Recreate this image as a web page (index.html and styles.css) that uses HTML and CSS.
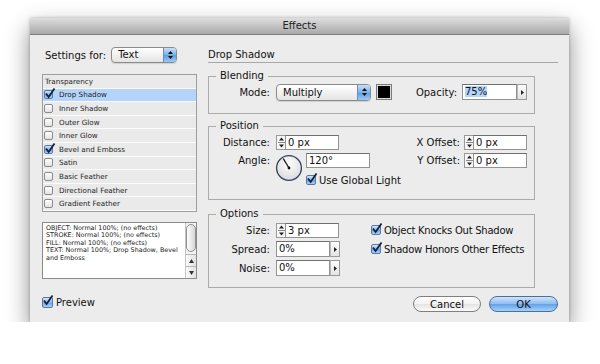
FILE: index.html
```html
<!DOCTYPE html>
<html lang="en">
<head>
    <meta charset="UTF-8">
    <meta name="viewport" content="width=device-width, initial-scale=1.0">
    <title>Effects</title>
    <link rel="stylesheet" href="styles.css">
</head>
<body>
    <div class="window">
        <div class="titlebar">Effects</div>
        <div class="content">
            <!-- Left column: target + effect list -->
            <div class="left">
                <div class="settings">
                    <span>Settings for:</span>
                    <div class="popup popup-text">
                        <span class="popup-label">Text</span>
                        <span class="popup-arrows">
                            <svg width="7" height="10" viewBox="0 0 7 10"><path d="M3.5 1 L6 4 H1Z M3.5 9 L6 6 H1Z" fill="#111"/></svg>
                        </span>
                    </div>
                </div>

                <ul class="effect-list">
                    <li class="head">Transparency</li>
                    <li class="selected"><span class="cb on"><svg viewBox="0 0 12 12"><path d="M2 5.5 L4.6 9 L10.5 0.5" fill="none" stroke="#15213a" stroke-width="1.8"/></svg></span>Drop Shadow</li>
                    <li><span class="cb"></span>Inner Shadow</li>
                    <li><span class="cb"></span>Outer Glow</li>
                    <li><span class="cb"></span>Inner Glow</li>
                    <li><span class="cb on"><svg viewBox="0 0 12 12"><path d="M2 5.5 L4.6 9 L10.5 0.5" fill="none" stroke="#15213a" stroke-width="1.8"/></svg></span>Bevel and Emboss</li>
                    <li><span class="cb"></span>Satin</li>
                    <li><span class="cb"></span>Basic Feather</li>
                    <li><span class="cb"></span>Directional Feather</li>
                    <li><span class="cb"></span>Gradient Feather</li>
                </ul>

                <div class="summary">
                    <div class="summary-text">OBJECT: Normal 100%; (no effects)<br>STROKE: Normal 100%; (no effects)<br>FILL: Normal 100%; (no effects)<br>TEXT: Normal 100%; Drop Shadow, Bevel<br>and Emboss</div>
                    <div class="scrollbar">
                        <div class="thumb"></div>
                        <div class="track"></div>
                        <div class="scroll-btn"><svg width="5" height="4" viewBox="0 0 5 4"><path d="M2.5 0 L5 4 H0Z" fill="#333"/></svg></div>
                        <div class="scroll-btn"><svg width="5" height="4" viewBox="0 0 5 4"><path d="M0 0 H5 L2.5 4Z" fill="#333"/></svg></div>
                    </div>
                </div>

                <div class="preview">
                    <span class="cb on big"><svg viewBox="0 0 12 12"><path d="M2 5.5 L4.6 9 L10.5 0.5" fill="none" stroke="#15213a" stroke-width="1.8"/></svg></span>
                    <span>Preview</span>
                </div>
            </div>

            <!-- Right column: drop shadow settings -->
            <div class="right">
                <h2>Drop Shadow</h2>

                <fieldset class="group blending">
                    <legend>Blending</legend>
                    <div class="row">
                        <span class="lbl">Mode:</span>
                        <div class="popup popup-mode">
                            <span class="popup-label">Multiply</span>
                            <span class="popup-arrows">
                                <svg width="7" height="10" viewBox="0 0 7 10"><path d="M3.5 1 L6 4 H1Z M3.5 9 L6 6 H1Z" fill="#111"/></svg>
                            </span>
                        </div>
                        <span class="swatch"></span>
                        <div class="opacity">
                            <span>Opacity:</span>
                            <div class="arrow-field">
                                <span class="field"><span class="sel">75%</span></span>
                                <span class="arrow-btn"><svg width="3" height="5" viewBox="0 0 3 5"><path d="M0 0 L3 2.5 L0 5Z" fill="#222"/></svg></span>
                            </div>
                        </div>
                    </div>
                </fieldset>

                <fieldset class="group position">
                    <legend>Position</legend>
                    <div class="cols">
                        <div class="col-left">
                            <div class="row">
                                <span class="lbl">Distance:</span>
                                <div class="spin-field">
                                    <span class="spinner"><svg width="7" height="13" viewBox="0 0 7 13"><path d="M3.5 1.5 L6 4.5 H1Z M3.5 11.5 L6 8.5 H1Z" fill="#222"/><path d="M0 6.5 H7" stroke="#888"/></svg></span>
                                    <span class="field">0 px</span>
                                </div>
                            </div>
                            <div class="angle-row">
                                <span class="lbl">Angle:</span>
                                <svg class="dial" width="28" height="28" viewBox="0 0 28 28">
                                    <defs>
                                        <radialGradient id="dialFill" cx="50%" cy="35%" r="65%">
                                            <stop offset="0" stop-color="#ffffff"/>
                                            <stop offset="1" stop-color="#d9d9d9"/>
                                        </radialGradient>
                                    </defs>
                                    <circle cx="14" cy="14" r="12.4" fill="url(#dialFill)" stroke="#33415f" stroke-width="1.3"/>
                                    <path d="M14 14 L8.3 4.6" stroke="#111" stroke-width="1.2"/>
                                    <circle cx="14" cy="14" r="1.4" fill="#111"/>
                                </svg>
                                <div class="angle-stack">
                                    <span class="field angle-field">120°</span>
                                    <div class="check-row">
                                        <span class="cb on"><svg viewBox="0 0 12 12"><path d="M2 5.5 L4.6 9 L10.5 0.5" fill="none" stroke="#15213a" stroke-width="1.8"/></svg></span>
                                        <span>Use Global Light</span>
                                    </div>
                                </div>
                            </div>
                        </div>
                        <div class="col-right">
                            <div class="row">
                                <span>X Offset:</span>
                                <div class="spin-field">
                                    <span class="spinner"><svg width="7" height="13" viewBox="0 0 7 13"><path d="M3.5 1.5 L6 4.5 H1Z M3.5 11.5 L6 8.5 H1Z" fill="#222"/><path d="M0 6.5 H7" stroke="#888"/></svg></span>
                                    <span class="field">0 px</span>
                                </div>
                            </div>
                            <div class="row">
                                <span>Y Offset:</span>
                                <div class="spin-field">
                                    <span class="spinner"><svg width="7" height="13" viewBox="0 0 7 13"><path d="M3.5 1.5 L6 4.5 H1Z M3.5 11.5 L6 8.5 H1Z" fill="#222"/><path d="M0 6.5 H7" stroke="#888"/></svg></span>
                                    <span class="field">0 px</span>
                                </div>
                            </div>
                        </div>
                    </div>
                </fieldset>

                <fieldset class="group options">
                    <legend>Options</legend>
                    <div class="cols">
                        <div class="col-left">
                            <div class="row">
                                <span class="lbl">Size:</span>
                                <div class="spin-field">
                                    <span class="spinner"><svg width="7" height="13" viewBox="0 0 7 13"><path d="M3.5 1.5 L6 4.5 H1Z M3.5 11.5 L6 8.5 H1Z" fill="#222"/><path d="M0 6.5 H7" stroke="#888"/></svg></span>
                                    <span class="field">3 px</span>
                                </div>
                            </div>
                            <div class="row">
                                <span class="lbl">Spread:</span>
                                <div class="arrow-field">
                                    <span class="field">0%</span>
                                    <span class="arrow-btn"><svg width="3" height="5" viewBox="0 0 3 5"><path d="M0 0 L3 2.5 L0 5Z" fill="#222"/></svg></span>
                                </div>
                            </div>
                            <div class="row">
                                <span class="lbl">Noise:</span>
                                <div class="arrow-field">
                                    <span class="field">0%</span>
                                    <span class="arrow-btn"><svg width="3" height="5" viewBox="0 0 3 5"><path d="M0 0 L3 2.5 L0 5Z" fill="#222"/></svg></span>
                                </div>
                            </div>
                        </div>
                        <div class="col-checks">
                            <div class="row">
                                <span class="cb on"><svg viewBox="0 0 12 12"><path d="M2 5.5 L4.6 9 L10.5 0.5" fill="none" stroke="#15213a" stroke-width="1.8"/></svg></span>
                                <span>Object Knocks Out Shadow</span>
                            </div>
                            <div class="row">
                                <span class="cb on"><svg viewBox="0 0 12 12"><path d="M2 5.5 L4.6 9 L10.5 0.5" fill="none" stroke="#15213a" stroke-width="1.8"/></svg></span>
                                <span>Shadow Honors Other Effects</span>
                            </div>
                        </div>
                    </div>
                </fieldset>

                <div class="buttons">
                    <button class="btn">Cancel</button>
                    <button class="btn btn-default">OK</button>
                </div>
            </div>
        </div>
    </div>
</body>
</html>
```

FILE: styles.css
```css
body {
    margin: 0;
    background: #fff;
    font-family: "DejaVu Sans", sans-serif;
    font-size: 10px;
    color: #111;
}
.window {
    width: 539px;
    height: 304px;
    margin: 18px 0 0 30px;
    background: #ececec;
    box-shadow: 0 10px 22px rgba(0, 0, 0, 0.45), 0 0 3px rgba(0, 0, 0, 0.25);
}
.titlebar {
    height: 16px;
    line-height: 16px;
    text-align: center;
    background: linear-gradient(#dedede, #a9a9a9);
    border-bottom: 1px solid #7c7c7c;
    color: #222;
}
.content {
    display: flex;
    gap: 11px;
    padding: 0 11px 0 12px;
}

/* left column */
.left {
    width: 155px;
}
.settings {
    display: flex;
    align-items: center;
    gap: 5px;
    height: 16px;
    margin-top: 12px;
    padding-left: 3px;
}
.popup {
    display: flex;
    box-sizing: border-box;
    border: 1px solid #8a8a8a;
    border-radius: 4px;
    background: linear-gradient(#ffffff, #e4e4e4);
    box-shadow: 0 1px 1px rgba(0, 0, 0, 0.12);
}
.popup-label {
    flex: 1;
    padding-left: 6px;
}
.popup-arrows {
    display: flex;
    align-items: center;
    justify-content: center;
    width: 12px;
    border-left: 1px solid #6e8db5;
    border-radius: 0 3px 3px 0;
    background: linear-gradient(#c8e0f8, #78b0ea 50%, #5b9be0 51%, #9ccaf5);
}
.popup-text {
    width: 66px;
    height: 16px;
    line-height: 14px;
}
.popup-mode {
    width: 95px;
    height: 17px;
    line-height: 15px;
}

.effect-list {
    list-style: none;
    margin: 11px 0 0;
    padding: 0;
    height: 138px;
    box-sizing: border-box;
    border: 1px solid #9d9d9d;
    background: #eaeaea;
    font-size: 7.2px;
    color: #222;
}
.effect-list li {
    display: flex;
    align-items: center;
    height: 12.6px;
    border-bottom: 1px solid #fbfbfb;
    white-space: nowrap;
}
.effect-list li.head {
    padding-left: 2px;
}
.effect-list li.selected {
    background: #b5d4fb;
}
.effect-list .cb {
    margin: 0 6px 0 1px;
    width: 9px;
    height: 9px;
}

.cb {
    position: relative;
    display: inline-block;
    flex: none;
    box-sizing: border-box;
    width: 10px;
    height: 10px;
    border: 1px solid #8a8a8a;
    border-radius: 2px;
    background: linear-gradient(#ffffff, #e2e2e2);
}
.cb.on {
    border-color: #5878a6;
    background: linear-gradient(#d3e7fc, #86b8ee 50%, #6aa4e6 51%, #a9d2f8);
}
.cb svg {
    position: absolute;
    left: -1px;
    top: -3px;
    width: 12px;
    height: 12px;
    overflow: visible;
}
.cb.big {
    width: 11px;
    height: 11px;
}

.summary {
    display: flex;
    height: 57px;
    margin-top: 10px;
    box-sizing: border-box;
    border: 1px solid #8b8b8b;
    background: #fff;
}
.summary-text {
    flex: 1;
    padding: 2px 3px;
    font-size: 6.4px;
    line-height: 7.4px;
    white-space: nowrap;
    color: #222;
}
.scrollbar {
    display: flex;
    flex-direction: column;
    width: 10px;
    border-left: 1px solid #c4c4c4;
    background: #f2f2f2;
}
.thumb {
    height: 28px;
    margin: 1px 0 0;
    box-sizing: border-box;
    border: 1px solid #8f8f8f;
    border-radius: 5px;
    background: linear-gradient(90deg, #ffffff, #d6d6d6);
}
.track {
    flex: 1;
}
.scroll-btn {
    display: flex;
    align-items: center;
    justify-content: center;
    height: 11px;
    border-top: 1px solid #b5b5b5;
    background: linear-gradient(90deg, #fafafa, #e2e2e2);
}

.preview {
    display: flex;
    align-items: center;
    gap: 3px;
    height: 12px;
    margin-top: 17px;
}

/* right column */
.right {
    width: 350px;
}
h2 {
    margin: 12px 0 0;
    height: 15px;
    line-height: 15px;
    font-size: 10px;
    font-weight: normal;
    border-bottom: 1px solid #a8a8a8;
}
.group {
    width: 327px;
    box-sizing: border-box;
    margin: 6px 0 0;
    padding: 0 7px 0 0;
    border: 1px solid #ababab;
    min-width: 0;
}
.group legend {
    margin-left: 7px;
    padding: 0 4px;
    font-size: 10px;
    line-height: 12px;
}
.blending {
    margin-top: 7px;
    padding-top: 1px;
    padding-bottom: 12px;
}
.position {
    padding-top: 3px;
    padding-bottom: 13px;
}
.options {
    margin-top: 8px;
    padding-top: 2px;
    padding-bottom: 11px;
}
.row {
    display: flex;
    align-items: center;
    white-space: nowrap;
}
.blending .row {
    height: 18px;
}
.lbl {
    width: 61px;
    margin-right: 6px;
    text-align: right;
}
.swatch {
    width: 16px;
    height: 16px;
    margin-left: 5px;
    box-sizing: border-box;
    border: 1px solid #7a7a7a;
    box-shadow: inset 0 0 0 1px #ddd;
    background: #000;
    background-clip: content-box;
    padding: 1px;
}
.opacity {
    display: flex;
    align-items: center;
    gap: 5px;
    margin-left: auto;
}

.field {
    display: inline-block;
    box-sizing: border-box;
    width: 54px;
    height: 15px;
    line-height: 13px;
    padding-left: 2px;
    border: 1px solid #939393;
    border-top-color: #6f6f6f;
    background: #fff;
    white-space: nowrap;
}
.sel {
    background: #b5d4fb;
}
.spin-field,
.arrow-field {
    display: flex;
}
.spinner {
    display: flex;
    align-items: center;
    justify-content: center;
    box-sizing: border-box;
    width: 9px;
    height: 15px;
    border: 1px solid #999;
    border-right: none;
    background: #f6f6f6;
}
.arrow-field .field {
    height: 16px;
    line-height: 14px;
}
.arrow-btn {
    display: flex;
    align-items: center;
    justify-content: center;
    box-sizing: border-box;
    width: 10px;
    height: 16px;
    border: 1px solid #999;
    border-left: 1px solid #b8b8b8;
    background: linear-gradient(#fdfdfd, #e4e4e4);
}
.opacity .field {
    width: 55px;
}

.cols {
    display: flex;
}
.position .cols {
    justify-content: space-between;
}
.position .row {
    height: 15px;
}
.col-right {
    display: flex;
    flex-direction: column;
    align-items: flex-end;
    gap: 3px;
}
.col-right .row {
    gap: 4px;
}
.angle-row {
    display: flex;
    align-items: flex-start;
    margin-top: 3px;
}
.angle-row .lbl {
    height: 15px;
    line-height: 15px;
    margin-right: 5px;
}
.dial {
    margin-top: 1px;
}
.angle-stack {
    margin-left: 3px;
}
.angle-field {
    display: block;
    width: 64px;
}
.check-row {
    display: flex;
    align-items: center;
    gap: 3px;
    height: 12px;
    margin-top: 6px;
    white-space: nowrap;
}

.options .col-left,
.col-checks {
    display: flex;
    flex-direction: column;
    gap: 3px;
}
.options .row {
    height: 16px;
}
.col-checks {
    margin-left: 31px;
    letter-spacing: -0.25px;
}
.col-checks .row {
    gap: 3px;
}

.buttons {
    display: flex;
    justify-content: flex-end;
    gap: 8px;
    margin-top: 8px;
}
.btn {
    width: 68px;
    height: 16px;
    padding: 0;
    font-family: "DejaVu Sans", sans-serif;
    font-size: 10px;
    color: #111;
    border: 1px solid #7f7f7f;
    border-radius: 8px;
    background: linear-gradient(#ffffff, #f2f2f2 50%, #e3e3e3 51%, #fbfbfb);
}
.btn-default {
    width: 69px;
    border-color: #4b6e9e;
    background: linear-gradient(#cfe4fa, #8cbcf0 50%, #62a0e6 51%, #a6d1f9);
}
```
